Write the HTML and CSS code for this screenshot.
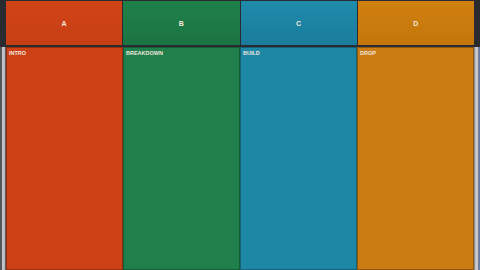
FILE: index.html
```html
<!DOCTYPE html>
<html>
<head>
<meta charset="utf-8">
<link rel="stylesheet" href="styles.css">
</head>
<body>
<div class="app">
  <div class="headers">
    <div class="head a">A</div>
    <div class="head b">B</div>
    <div class="head c">C</div>
    <div class="head d">D</div>
  </div>
  <div class="lanes">
    <div class="rail left"></div>
    <div class="sections">
      <div class="sec a"><span class="label">INTRO</span></div>
      <div class="sec b"><span class="label">BREAKDOWN</span></div>
      <div class="sec c"><span class="label">BUILD</span></div>
      <div class="sec d"><span class="label">DROP</span></div>
    </div>
    <div class="rail right"></div>
  </div>
</div>
</body>
</html>
```
FILE: styles.css
```css
html, body {
  margin: 0;
  padding: 0;
  width: 480px;
  height: 270px;
  overflow: hidden;
  background: #2a2b30;
  font-family: "Liberation Sans", Arial, sans-serif;
}
.app {
  display: flex;
  flex-direction: column;
  height: 270px;
}
.headers {
  display: grid;
  grid-template-columns: repeat(4, 1fr);
  gap: 1px;
  padding: 1px 6px 0 6px;
  height: 44px;
}
.head {
  display: flex;
  align-items: center;
  justify-content: center;
  color: #f3e6dc;
  font-size: 7px;
  font-weight: bold;
}
.head.a { background: linear-gradient(#d04417, #c63f14); }
.head.b { background: linear-gradient(#1f8049, #1b7442); }
.head.c { background: linear-gradient(#1f8bab, #1a7c9c); }
.head.d { background: linear-gradient(#d0800f, #c4760c); }
.lanes {
  display: flex;
  flex: 1;
  margin-top: 2px;
}
.rail {
  width: 6px;
}
.rail.left {
  background: linear-gradient(90deg, #55565c 0, #55565c 2px, #c9c9cc 2px, #b8b8bc 5px, #5a5a60 5px);
}
.rail.right {
  background: linear-gradient(90deg, #6a6a70 0, #a9a9ae 1px, #d0d0d4 2px, #c0c0c6 4px, #7680a0 4px, #6a78a0 6px);
}
.sections {
  flex: 1;
  display: grid;
  grid-template-columns: repeat(4, 1fr);
}
.sec {
  border: 1px solid rgba(0, 0, 0, 0.28);
  padding: 2px 2px;
}
.sec.a { background: #cc4216; }
.sec.b { background: #1f804b; }
.sec.c { background: #1d87a6; }
.sec.d { background: #cb7c13; }
.label {
  display: block;
  color: #f1e6de;
  font-size: 5.5px;
  font-weight: bold;
  line-height: 6px;
}
```
